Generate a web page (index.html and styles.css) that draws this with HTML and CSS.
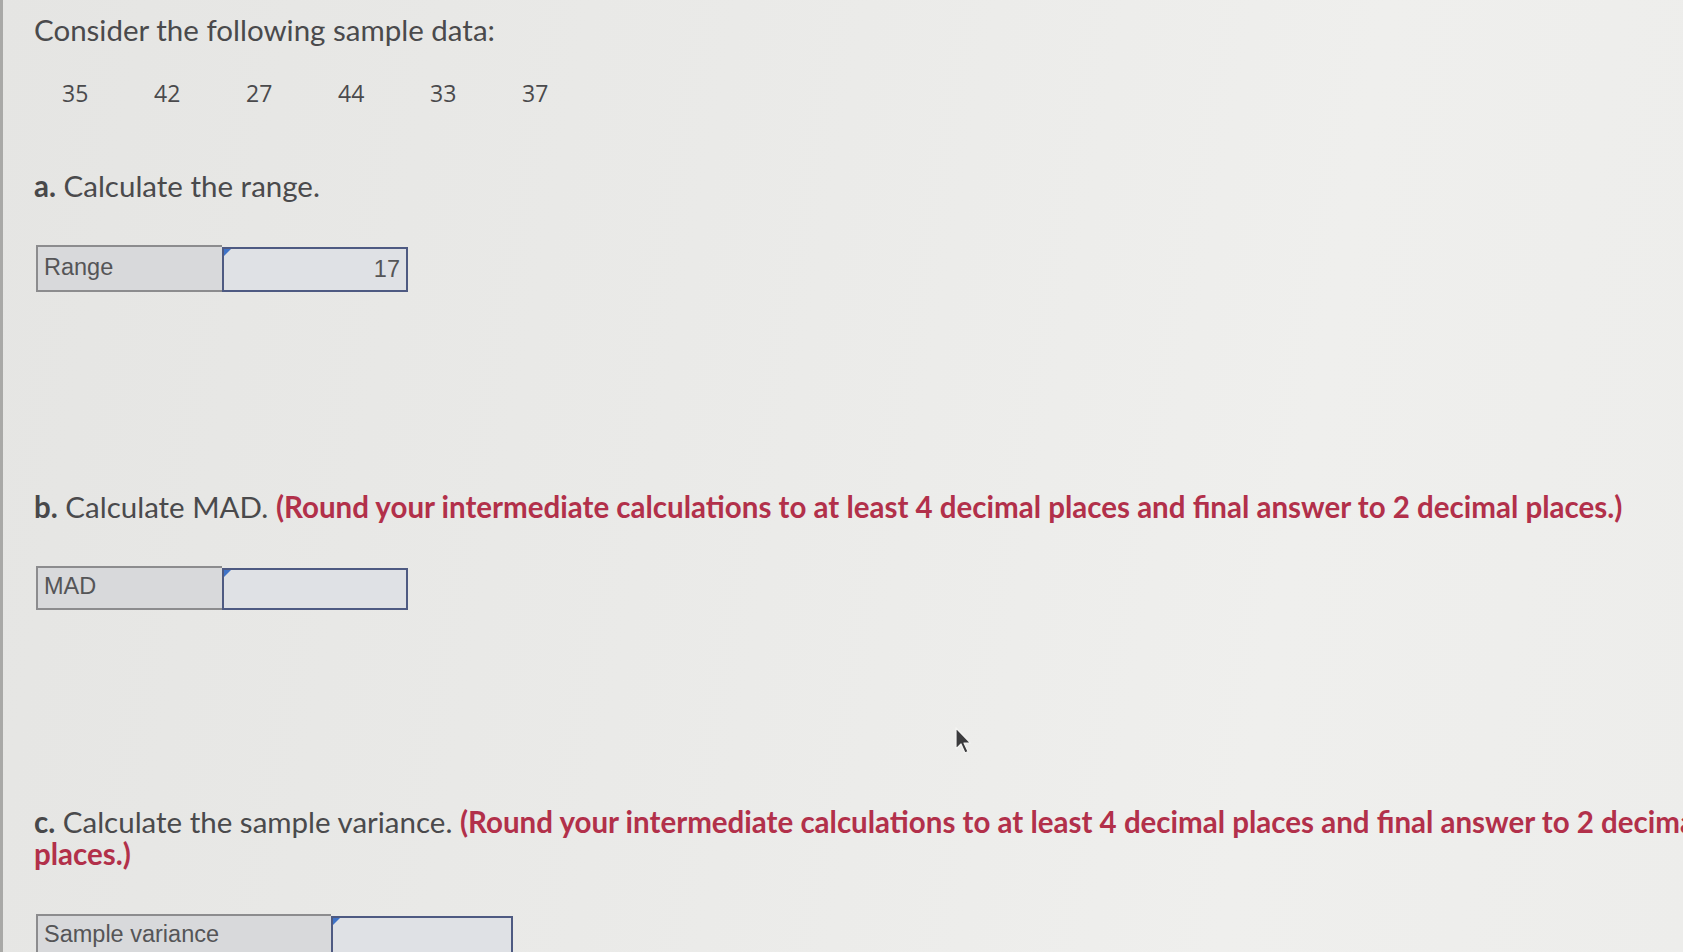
FILE: index.html
```html
<!DOCTYPE html>
<html>
<head>
<meta charset="utf-8">
<link rel="stylesheet" href="styles.css">
</head>
<body>
<div class="page">
  <p class="intro">Consider the following sample data:</p>
  <div class="data">
    <span>35</span><span>42</span><span>27</span><span>44</span><span>33</span><span>37</span>
  </div>

  <p class="q q-a"><b class="lbl">a.</b> Calculate the range.</p>
  <div class="answer">
    <div class="cell-label">Range</div>
    <div class="cell-input">17</div>
  </div>

  <p class="q q-b"><b class="lbl">b.</b> Calculate MAD. <b class="note">(Round your intermediate calculations to at least 4 decimal places and final answer to 2 decimal places.)</b></p>
  <div class="answer answer-mad">
    <div class="cell-label">MAD</div>
    <div class="cell-input"></div>
  </div>

  <p class="q q-c"><b class="lbl">c.</b> Calculate the sample variance. <b class="note">(Round your intermediate calculations to at least 4 decimal places and final answer to 2 decimal<br>places.)</b></p>
  <div class="answer answer-var">
    <div class="cell-label">Sample variance</div>
    <div class="cell-input"></div>
  </div>

  <svg class="cursor" width="18" height="28" viewBox="0 0 18 28">
    <path d="M2 1 L2 22 L7 17 L11 26 L14 24.5 L10 16 L16.5 16 Z" fill="#3b3b3d" stroke="#f4f4f2" stroke-width="1.2" stroke-linejoin="round"/>
  </svg>
</div>
</body>
</html>
```

FILE: styles.css
```css
html, body {
  margin: 0;
  padding: 0;
  height: 100%;
  overflow: hidden;
}
body {
  background: linear-gradient(100deg, #e5e5e3 0%, #eaeae8 40%, #efefed 75%, #ededeb 100%);
  font-family: Lato, "Open Sans", sans-serif;
  color: #4a4a4c;
}
.page {
  position: relative;
  height: 100%;
  box-sizing: border-box;
  padding: 14px 0 0 31px;
  border-left: 3px solid #a9a9a7;
}
p { margin: 0; }
.intro {
  font-size: 29.5px;
  line-height: 32px;
}
.data {
  display: grid;
  grid-template-columns: repeat(6, 92px);
  padding-left: 28px;
  margin-top: 31px;
  font-family: "Open Sans", sans-serif;
  font-size: 23px;
  line-height: 32px;
  color: #4a4a4c;
}
.q {
  font-size: 29.5px;
  line-height: 32px;
  white-space: nowrap;
}
.q-a { margin-top: 61px; }
.q-b { margin-top: 199px; }
.q-c { margin-top: 196px; }
.lbl { font-weight: 700; color: #48484a; }
.note { font-weight: 700; color: #b2304a; }

.answer {
  display: flex;
  margin: 43px 0 0 2px;
  height: 47px;
  font-family: "Liberation Sans", Arial, sans-serif;
  font-size: 23.5px;
  color: #555557;
}
.cell-label {
  width: 186px;
  box-sizing: border-box;
  background: #d8d9db;
  border: 2px solid #8c8c8e;
  border-right: none;
  padding: 0 0 0 6px;
  line-height: 40px;
}
.cell-input {
  position: relative;
  width: 186px;
  box-sizing: border-box;
  background: #dfe1e5;
  border: 2px solid #4e5a82;
  margin-top: 2px;
  text-align: right;
  padding-right: 6px;
  line-height: 40px;
}
.cell-input::before {
  content: "";
  position: absolute;
  left: 0;
  top: 0;
  border-top: 7px solid #3f73c8;
  border-right: 7px solid transparent;
  border-bottom: 5px solid transparent;
  width: 0;
  height: 0;
}
.answer-mad { height: 44px; }
.answer-mad .cell-label, .answer-mad .cell-input { line-height: 37px; }
.answer-var { margin-top: 44px; height: 60px; }
.answer-var .cell-label { width: 295px; line-height: 36px; }
.answer-var .cell-input { width: 182px; }

.cursor {
  position: absolute;
  left: 951px;
  top: 727px;
}
```
